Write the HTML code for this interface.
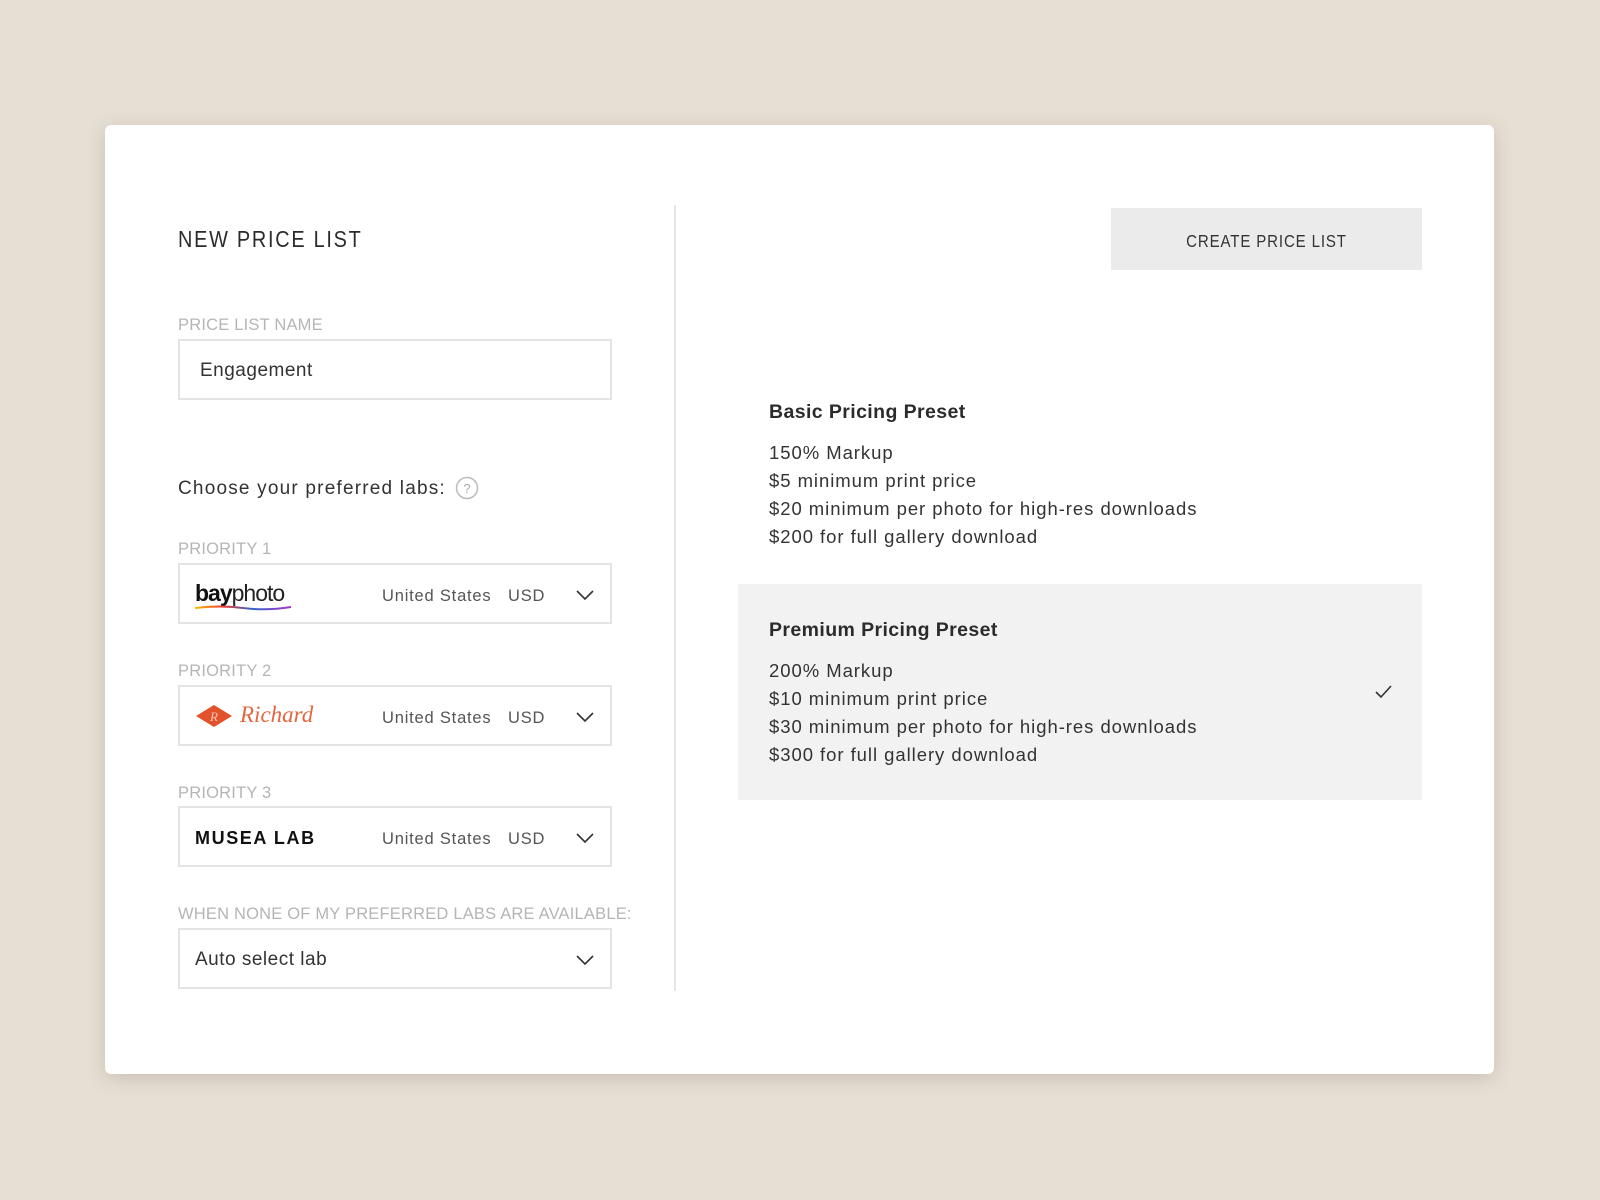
<!DOCTYPE html>
<html><head><meta charset="utf-8"><style>
*{margin:0;padding:0;box-sizing:border-box}
body{width:1600px;height:1200px;background:#e6dfd4;font-family:"Liberation Sans",sans-serif;color:#333;position:relative;overflow:hidden}
.card{position:absolute;left:105px;top:125px;width:1389px;height:949px;background:#fff;border-radius:6px;box-shadow:0 4px 18px rgba(120,105,80,.25)}
.a{position:absolute;white-space:nowrap}
.title{font-size:23px;letter-spacing:2px;color:#2b2b2b;transform:scaleX(.865);transform-origin:left}
.lbl{font-size:16.5px;color:#b5b5b5;letter-spacing:.2px}
.box{position:absolute;left:178px;width:434px;height:61px;border:2px solid #e4e4e4;background:#fff}
.t{font-size:19px;letter-spacing:.5px;color:#333}
.sm{font-size:16.5px;letter-spacing:.8px;color:#555}
.chev{position:absolute;width:18px;height:10px}
.line{font-size:18.5px;letter-spacing:.95px;color:#333}
.h{font-size:19.5px;font-weight:bold;letter-spacing:.4px;color:#2b2b2b}
</style></head><body>
<div class="card"></div>
<div class="a title" style="left:178px;top:226px">NEW PRICE LIST</div>
<div class="a lbl" style="left:178px;top:316px">PRICE LIST NAME</div>
<div class="box" style="top:339px"><div class="a t" style="left:20px;top:19px">Engagement</div></div>
<div class="a t" style="left:178px;top:478px;letter-spacing:1.2px">Choose your preferred labs:</div>
<svg class="a" style="left:455px;top:476px" width="24" height="24"><circle cx="12" cy="12" r="10.5" fill="none" stroke="#bbb" stroke-width="1.5"/><text x="12" y="17" font-size="13" text-anchor="middle" fill="#aaa" font-family="Liberation Sans">?</text></svg>

<div class="a lbl" style="left:178px;top:540px">PRIORITY 1</div>
<div class="box" style="top:563px">
 <div class="a" style="left:15px;top:15px;font-size:23px;font-weight:bold;letter-spacing:-1px;color:#111">bay<span style="font-weight:normal;color:#222">photo</span></div>
 <svg class="a" style="left:15px;top:40px" width="96" height="6"><defs><linearGradient id="g"><stop offset="0" stop-color="#f5c000"/><stop offset=".3" stop-color="#e33"/><stop offset=".6" stop-color="#36c"/><stop offset="1" stop-color="#a3c"/></linearGradient></defs><path d="M0 3 Q25 0 48 3 T96 2" stroke="url(#g)" stroke-width="2" fill="none"/></svg>
 <div class="a sm" style="left:202px;top:22px">United States</div>
 <div class="a sm" style="left:328px;top:22px">USD</div>
 <svg class="chev" style="left:396px;top:25px" viewBox="0 0 18 10"><path d="M1 1 L9 9 L17 1" fill="none" stroke="#333" stroke-width="1.6"/></svg>
</div>

<div class="a lbl" style="left:178px;top:662px">PRIORITY 2</div>
<div class="box" style="top:685px">
 <svg class="a" style="left:15px;top:17px" width="38" height="24"><path d="M1 12 L19 1 L37 12 L19 23 Z" fill="#e3532b"/><text x="19" y="17" font-size="13" text-anchor="middle" fill="#f6c6b5" font-family="Liberation Serif" font-style="italic">R</text></svg>
 <div class="a" style="left:60px;top:15px;font-family:'Liberation Serif',serif;font-style:italic;font-size:23px;color:#e3663f">Richard</div>
 <div class="a sm" style="left:202px;top:22px">United States</div>
 <div class="a sm" style="left:328px;top:22px">USD</div>
 <svg class="chev" style="left:396px;top:25px" viewBox="0 0 18 10"><path d="M1 1 L9 9 L17 1" fill="none" stroke="#333" stroke-width="1.6"/></svg>
</div>

<div class="a lbl" style="left:178px;top:784px">PRIORITY 3</div>
<div class="box" style="top:806px">
 <div class="a" style="left:15px;top:20px;font-size:18px;font-weight:bold;letter-spacing:1.6px;color:#111">MUSEA LAB</div>
 <div class="a sm" style="left:202px;top:22px">United States</div>
 <div class="a sm" style="left:328px;top:22px">USD</div>
 <svg class="chev" style="left:396px;top:25px" viewBox="0 0 18 10"><path d="M1 1 L9 9 L17 1" fill="none" stroke="#333" stroke-width="1.6"/></svg>
</div>

<div class="a lbl" style="left:178px;top:905px">WHEN NONE OF MY PREFERRED LABS ARE AVAILABLE:</div>
<div class="box" style="top:928px">
 <div class="a t" style="left:15px;top:19px">Auto select lab</div>
 <svg class="chev" style="left:396px;top:25px" viewBox="0 0 18 10"><path d="M1 1 L9 9 L17 1" fill="none" stroke="#333" stroke-width="1.6"/></svg>
</div>

<div class="a" style="left:674px;top:205px;width:2px;height:786px;background:#e6e6e6"></div>

<div class="a" style="left:1111px;top:208px;width:311px;height:62px;background:#ebebeb"></div>
<div class="a" style="left:1111px;top:231px;width:311px;text-align:center;font-size:17.5px;letter-spacing:1px;color:#333;transform:scaleX(.86)">CREATE PRICE LIST</div>

<div class="a h" style="left:769px;top:401px">Basic Pricing Preset</div>
<div class="a line" style="left:769px;top:442px">150% Markup</div>
<div class="a line" style="left:769px;top:470px">$5 minimum print price</div>
<div class="a line" style="left:769px;top:498px">$20 minimum per photo for high-res downloads</div>
<div class="a line" style="left:769px;top:526px">$200 for full gallery download</div>

<div class="a" style="left:738px;top:584px;width:684px;height:216px;background:#f2f2f2"></div>
<div class="a h" style="left:769px;top:619px">Premium Pricing Preset</div>
<div class="a line" style="left:769px;top:660px">200% Markup</div>
<div class="a line" style="left:769px;top:688px">$10 minimum print price</div>
<div class="a line" style="left:769px;top:716px">$30 minimum per photo for high-res downloads</div>
<div class="a line" style="left:769px;top:744px">$300 for full gallery download</div>
<svg class="a" style="left:1375px;top:685px" width="18" height="14"><path d="M1 7 L6 12 L16 1" fill="none" stroke="#333" stroke-width="1.6"/></svg>
</body></html>
